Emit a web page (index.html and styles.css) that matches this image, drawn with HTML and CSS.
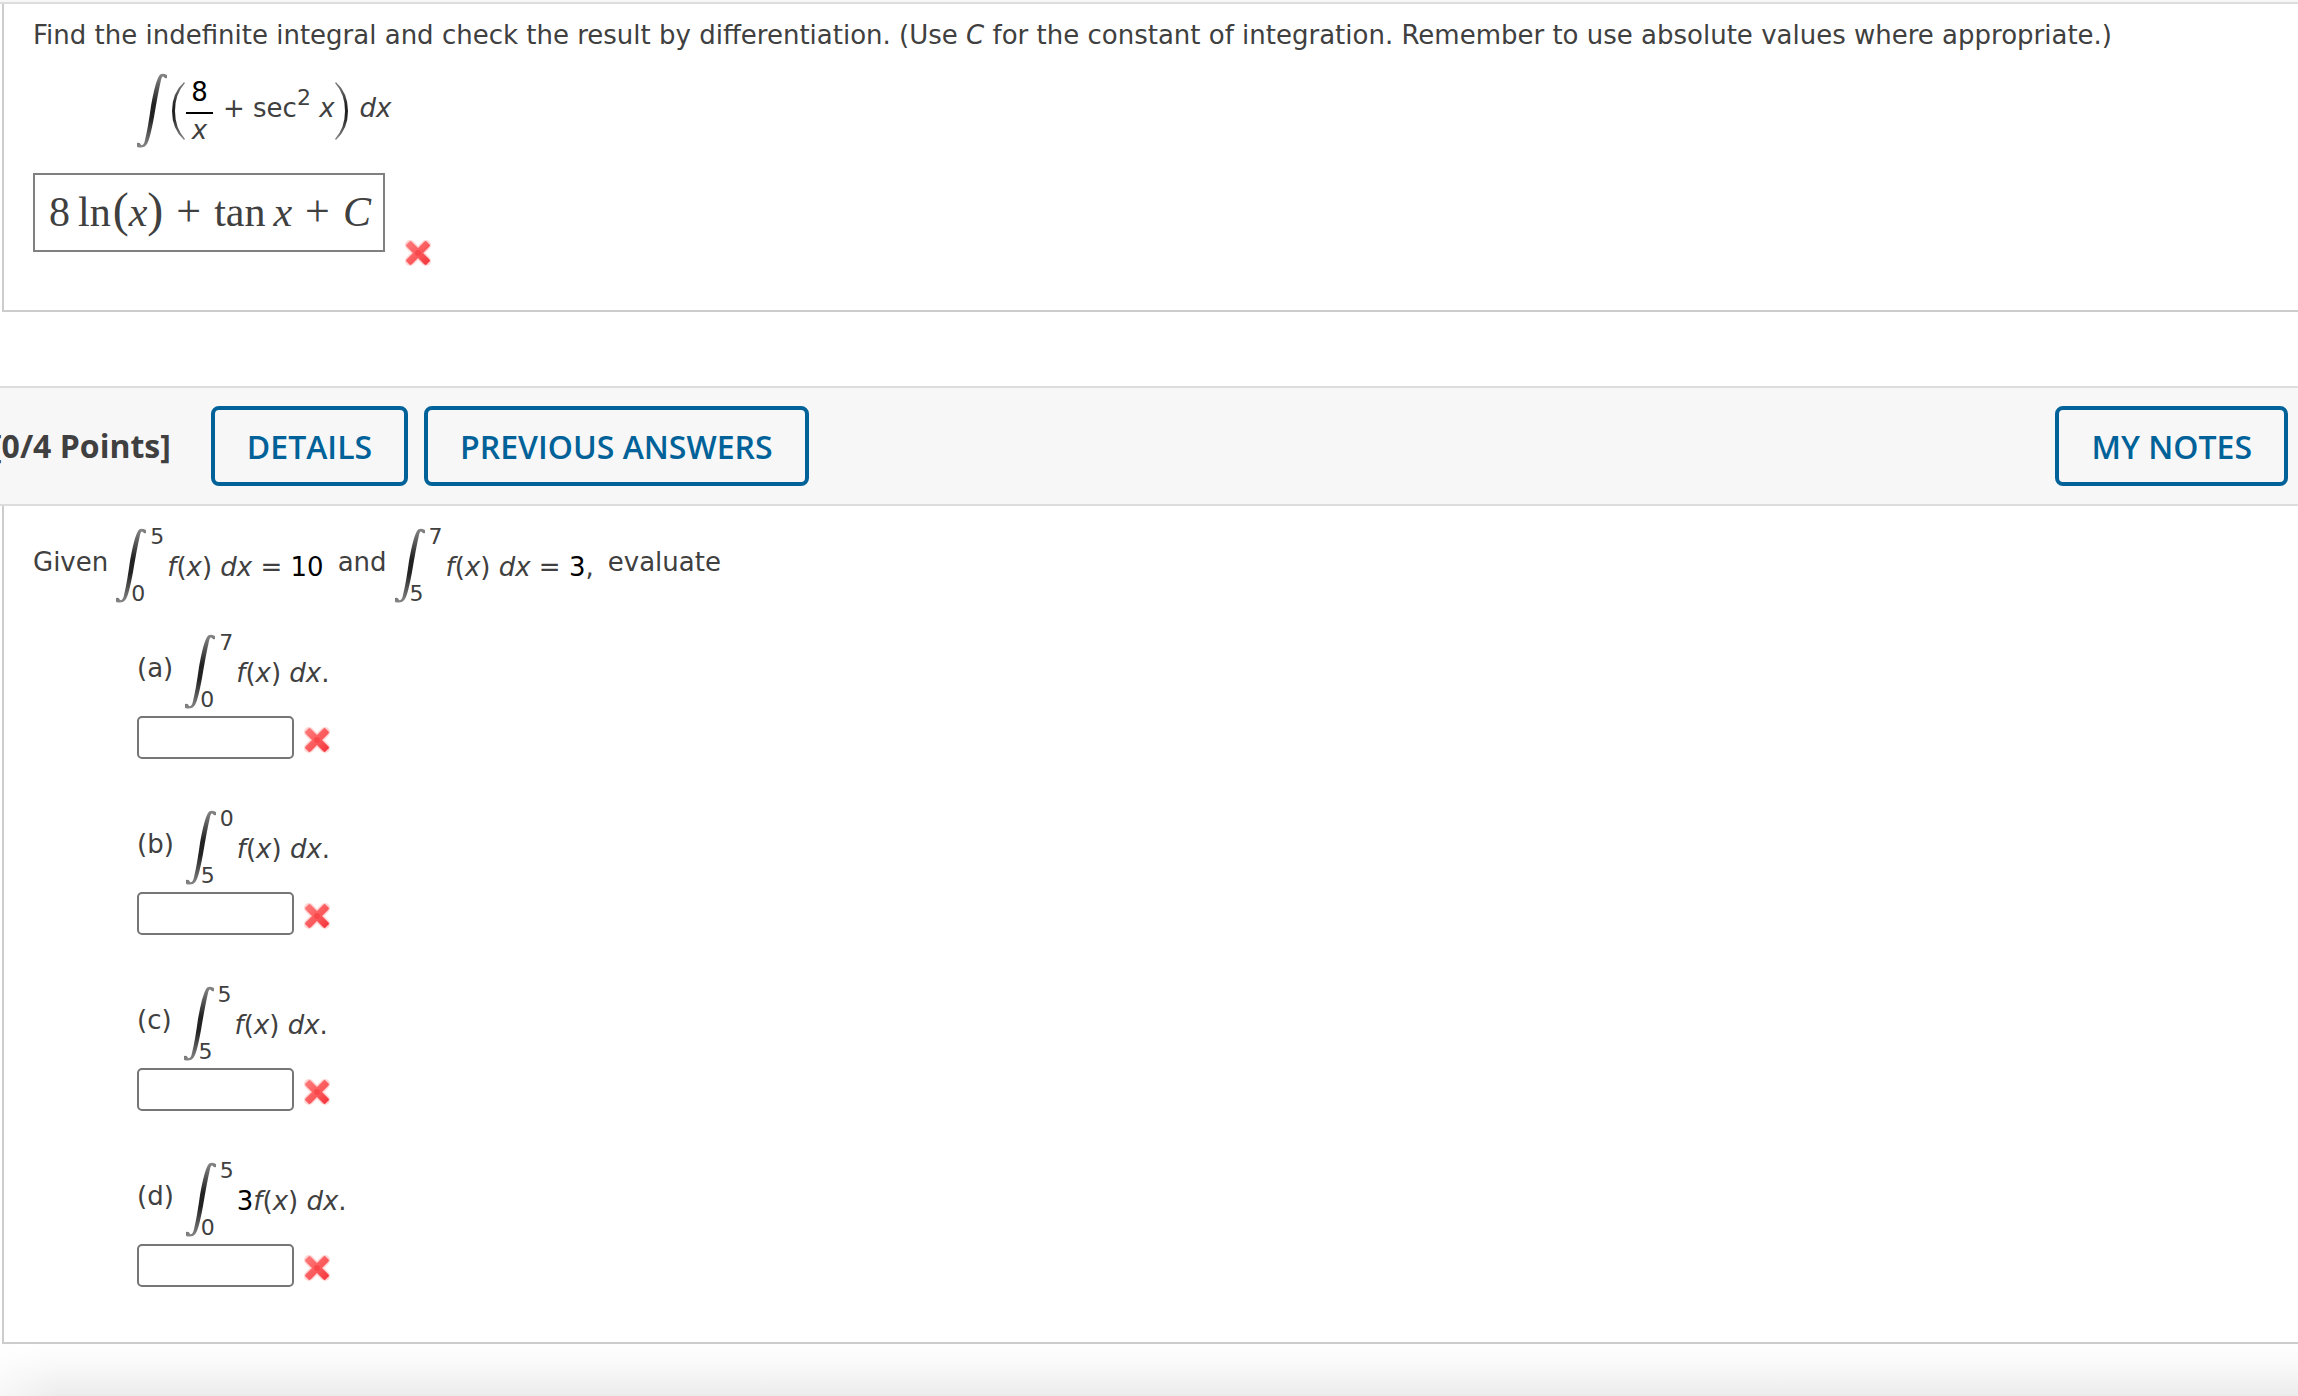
FILE: index.html
```html
<!DOCTYPE html>
<html lang="en">
<head>
    <meta charset="UTF-8">
    <meta name="viewport" content="width=device-width, initial-scale=1.0">
    <title>Integration Homework</title>
    <link rel="stylesheet" href="styles.css">
</head>
<body>

    <!-- shared symbols -->
    <svg class="symbols" aria-hidden="true">
        <linearGradient id="red" x1="0" y1="0" x2="1" y2="1">
            <stop offset="0" stop-color="#ff7c7c"/>
            <stop offset="0.55" stop-color="#fb5a5c"/>
            <stop offset="1" stop-color="#f23036"/>
        </linearGradient>
        <linearGradient id="ink" x1="0" y1="0" x2="0" y2="1">
            <stop offset="0" stop-color="#888"/>
            <stop offset="0.4" stop-color="#222"/>
            <stop offset="0.6" stop-color="#222"/>
            <stop offset="1" stop-color="#888"/>
        </linearGradient>
        <symbol id="integral" viewBox="0 0 30 75">
            <path d="M30 2 L30 5 Q28 6 27 4 Q25 2 24 7 Q21 20 17 44 Q13 66 10 71 Q7 76 0 74 L0 70 Q3 69 4 72 Q7 73 8 67 Q11 55 14 33 Q18 10 22 3 Q24 -1 30 2 Z" fill="url(#ink)"/>
        </symbol>
        <symbol id="paren" viewBox="0 0 13 58">
            <path d="M12 0 Q0 11 0 29 Q0 47 12 58 L13 57 Q3 46 3 29 Q3 12 13 1 Z" fill="url(#ink)"/>
        </symbol>
        <symbol id="wrong" viewBox="0 0 28 28">
            <path d="M6 6 L22 22 M22 6 L6 22" stroke="#ffd5d5" stroke-width="10" stroke-linecap="round"/>
            <path d="M2 6 L6 2 Q7 2 8 3 L14 9 L20 3 Q21 2 22 2 L26 6 Q26 7 25 8 L19 14 L25 20 Q26 21 26 22 L22 26 Q21 26 20 25 L14 19 L8 25 Q7 26 6 26 L2 22 Q2 21 3 20 L9 14 L3 8 Q2 7 2 6 Z" fill="url(#red)"/>
            <circle cx="14" cy="14" r="3" fill="#f9484c"/>
        </symbol>
    </svg>

    <main>
        <section class="question first">
            <p class="prompt">Find the indefinite integral and check the result by differentiation. (Use <i>C</i> for the constant of integration. Remember to use absolute values where appropriate.)</p>
            <div class="formula">
                <svg class="integral"><use href="#integral"/></svg>
                <svg class="paren"><use href="#paren"/></svg>
                <span class="fraction"><b>8</b><i>x</i></span>
                <span class="sum">+ sec<sup>2</sup> <i>x</i></span>
                <svg class="paren close"><use href="#paren"/></svg>
                <i class="dx">dx</i>
            </div>
            <div class="response">
                <div class="answer">
                    <span>8</span><span class="fn">ln</span><span class="big">(</span><i>x</i><span class="big">)</span><span class="op">+</span><span>tan</span><i class="arg">x</i><span class="op">+</span><i>C</i>
                </div>
                <svg class="wrong" role="img" aria-label="Incorrect"><use href="#wrong"/></svg>
            </div>
        </section>

        <header class="bar">
            <h2>[0/4 Points]</h2>
            <button type="button">DETAILS</button>
            <button type="button">PREVIOUS ANSWERS</button>
            <button type="button" class="notes">MY NOTES</button>
        </header>

        <section class="question second">
            <div class="math given">
                <span class="text">Given</span>
                <svg class="integral"><use href="#integral"/></svg>
                <span class="limits"><span>5</span><span>0</span></span>
                <span class="expr"><i>f</i>(<i>x</i>) <i>dx</i> = <b>10</b></span>
                <span class="text">and</span>
                <svg class="integral"><use href="#integral"/></svg>
                <span class="limits"><span>7</span><span>5</span></span>
                <span class="expr"><i>f</i>(<i>x</i>) <i>dx</i> = <b>3</b>,</span>
                <span class="text">evaluate</span>
            </div>

            <div class="part">
                <label class="math" for="part-a">
                    <span class="text">(a)</span>
                    <svg class="integral"><use href="#integral"/></svg>
                    <span class="limits"><span>7</span><span>0</span></span>
                    <span class="expr"><i>f</i>(<i>x</i>) <i>dx</i>.</span>
                </label>
                <div class="entry">
                    <input type="text" id="part-a">
                    <svg class="wrong" role="img" aria-label="Incorrect"><use href="#wrong"/></svg>
                </div>
            </div>

            <div class="part">
                <label class="math" for="part-b">
                    <span class="text">(b)</span>
                    <svg class="integral"><use href="#integral"/></svg>
                    <span class="limits"><span>0</span><span>5</span></span>
                    <span class="expr"><i>f</i>(<i>x</i>) <i>dx</i>.</span>
                </label>
                <div class="entry">
                    <input type="text" id="part-b">
                    <svg class="wrong" role="img" aria-label="Incorrect"><use href="#wrong"/></svg>
                </div>
            </div>

            <div class="part">
                <label class="math" for="part-c">
                    <span class="text">(c)</span>
                    <svg class="integral"><use href="#integral"/></svg>
                    <span class="limits"><span>5</span><span>5</span></span>
                    <span class="expr"><i>f</i>(<i>x</i>) <i>dx</i>.</span>
                </label>
                <div class="entry">
                    <input type="text" id="part-c">
                    <svg class="wrong" role="img" aria-label="Incorrect"><use href="#wrong"/></svg>
                </div>
            </div>

            <div class="part">
                <label class="math" for="part-d">
                    <span class="text">(d)</span>
                    <svg class="integral"><use href="#integral"/></svg>
                    <span class="limits"><span>5</span><span>0</span></span>
                    <span class="expr"><b>3</b><i>f</i>(<i>x</i>) <i>dx</i>.</span>
                </label>
                <div class="entry">
                    <input type="text" id="part-d">
                    <svg class="wrong" role="img" aria-label="Incorrect"><use href="#wrong"/></svg>
                </div>
            </div>
        </section>
    </main>
    <footer class="shade"></footer>

</body>
</html>
```
FILE: styles.css
```css
* {
    box-sizing: border-box;
}
body {
    margin: 0;
    min-height: 100vh;
    display: flex;
    flex-direction: column;
    font-family: Verdana, "DejaVu Sans", sans-serif;
    font-size: 26px;
    line-height: 32px;
    color: #404040;
    background-color: #fff;
    border-top: 2px solid #f7f7f7;
}
main {
    border-top: 2px solid #ddd;
}
svg {
    flex: none;
}
b {
    font-weight: normal;
    color: #000;
}
.symbols {
    position: absolute;
    width: 0;
    height: 0;
}
.question {
    margin-left: 2px;
    padding-left: 29px;
    border-left: 2px solid #ccc;
    border-bottom: 2px solid #ccc;
}
.first {
    padding-top: 15px;
    padding-bottom: 58px;
}
.prompt {
    margin: 0;
}

/* integral at the top */
.formula {
    display: flex;
    align-items: center;
    margin-top: 22px;
    padding-left: 104px;
    height: 75px;
}
.integral {
    width: 30px;
    height: 75px;
}
.paren {
    width: 13px;
    height: 58px;
    margin-left: 5px;
}
.close {
    margin-left: 0;
    transform: scaleX(-1);
}
.fraction {
    display: flex;
    flex-direction: column;
    width: 27px;
    margin: 0 10px 4px 1px;
    text-align: center;
}
.fraction b {
    border-bottom: 2px solid #000;
    line-height: 40px;
}
.sum,
.dx {
    padding-bottom: 5px;
}
sup {
    font-size: 22px;
    line-height: 0;
    vertical-align: 12px;
}
.dx {
    margin-left: 12px;
}

.response {
    display: flex;
    align-items: flex-end;
    gap: 19px;
    margin-top: 25px;
}
.answer {
    display: flex;
    align-items: baseline;
    height: 79px;
    padding: 0 12px 0 14px;
    border: 2px solid #808080;
    font-family: "Liberation Serif", serif;
    font-size: 42px;
    line-height: 70px;
}
.fn {
    margin-left: 8px;
    margin-right: 2px;
}
.big {
    font-size: 48px;
}
.op {
    margin: 0 13px;
    font-size: 44px;
}
.arg {
    margin-left: 8px;
}
.wrong {
    width: 28px;
    height: 28px;
}
.response .wrong {
    margin-bottom: -15px;
}

/* question header */
.bar {
    display: flex;
    align-items: center;
    gap: 16px;
    height: 120px;
    margin-top: 74px;
    padding-right: 10px;
    border-top: 2px solid #ddd;
    border-bottom: 2px solid #ddd;
    background-color: #f7f7f7;
}
.bar h2 {
    margin: 0 24px 0 -9px;
    font-family: "Open Sans", sans-serif;
    font-size: 32px;
    font-weight: 700;
}
button {
    height: 80px;
    padding: 0 32px;
    border: 4px solid #006298;
    border-radius: 8px;
    background-color: transparent;
    font-family: "Open Sans", sans-serif;
    font-size: 32px;
    font-weight: 600;
    color: #006298;
    cursor: pointer;
}
.notes {
    margin-left: auto;
}

/* definite integrals */
.second {
    padding-top: 22px;
    padding-bottom: 55px;
}
.math {
    display: flex;
    align-items: center;
    height: 75px;
}
.text {
    padding-bottom: 8px;
}
.math .integral {
    margin-left: 12px;
}
.given .integral {
    margin-left: 8px;
}
.limits {
    display: flex;
    flex-direction: column;
    justify-content: space-between;
    height: 75px;
    width: 36px;
    margin-left: -15px;
    padding-top: 1px;
    padding-bottom: 1px;
    font-size: 22px;
    line-height: 16px;
}
.limits span:first-child {
    padding-left: 19px;
}
.expr {
    padding-top: 3px;
}
.expr + .text {
    margin-left: 14px;
}
.part {
    margin-top: 51px;
    padding-left: 104px;
}
.given + .part {
    margin-top: 31px;
}
.entry {
    display: flex;
    align-items: center;
    gap: 9px;
    margin-top: 7px;
}
.entry .wrong {
    margin-top: 5px;
}
input {
    width: 157px;
    height: 43px;
    padding: 2px 8px;
    border: 2px solid #767676;
    border-radius: 5px;
    font-family: inherit;
    font-size: 26px;
    color: #404040;
}
.shade {
    flex: 1;
    background-image: linear-gradient(to right, rgba(255, 255, 255, 0.6), rgba(255, 255, 255, 0) 60px), linear-gradient(#fff, #fafafa 35%, #ececec);
}
```
